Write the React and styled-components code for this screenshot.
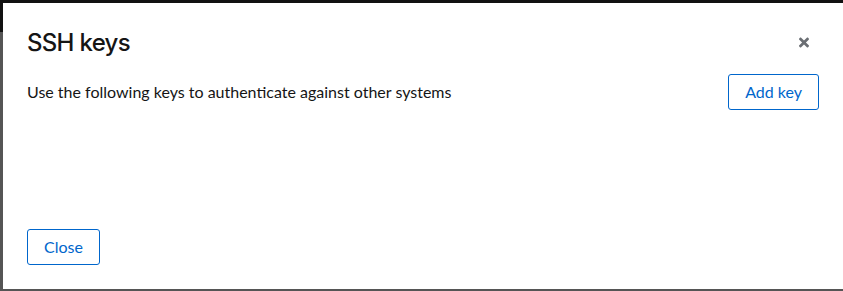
import React from 'react';
import styled, { createGlobalStyle } from 'styled-components';

const GlobalStyle = createGlobalStyle`
  html, body {
    margin: 0;
    padding: 0;
  }
  body {
    font-family: Lato, "Noto Sans", "Liberation Sans", sans-serif;
    color: #151515;
  }
`;

const Backdrop = styled.div`
  width: 843px;
  height: 291px;
  overflow: hidden;
  box-sizing: border-box;
  padding: 3px 0 2px 3px;
  background: linear-gradient(to bottom, #111111 32px, #555555 32px);
`;

const ModalBox = styled.div`
  height: 100%;
  background: #ffffff;
  display: flex;
  flex-direction: column;
`;

const Header = styled.header`
  display: flex;
  align-items: center;
  justify-content: space-between;
  padding: 24px 24px 0 24px;
`;

const Title = styled.h1`
  margin: 0;
  font-family: Inter, "Noto Sans", sans-serif;
  font-size: 24px;
  font-weight: 500;
  line-height: 31px;
  letter-spacing: -0.7px;
`;

const CloseIcon = styled.button`
  border: 0;
  background: transparent;
  padding: 0;
  margin-right: 10px;
  display: flex;
  color: #6a6e73;
  cursor: pointer;
`;

const Body = styled.div`
  flex: 1;
  padding: 16px 24px 0 24px;
`;

const Row = styled.div`
  display: flex;
  align-items: center;
  justify-content: space-between;
`;

const Description = styled.p`
  margin: 0;
  font-size: 16px;
  line-height: 24px;
`;

const Footer = styled.footer`
  padding: 0 24px 24px 24px;
  display: flex;
`;

const SecondaryButton = styled.button`
  font-family: inherit;
  font-size: 16px;
  line-height: 24px;
  color: #0066cc;
  background: #ffffff;
  border: 1px solid #0066cc;
  border-radius: 3px;
  padding: 5px 16px;
  cursor: pointer;
`;

const TimesIcon = () => (
  <svg width="10" height="15" viewBox="0 0 352 512" fill="currentColor" aria-hidden="true">
    <path d="M242.72 256l100.07-100.07c12.28-12.28 12.28-32.19 0-44.48l-22.24-22.24c-12.28-12.28-32.19-12.28-44.48 0L176 189.28 75.930 89.21c-12.28-12.28-32.19-12.28-44.48 0L9.21 111.45c-12.28 12.28-12.28 32.19 0 44.48L109.28 256 9.21 356.07c-12.28 12.28-12.28 32.19 0 44.48l22.24 22.24c12.28 12.28 32.2 12.28 44.48 0L176 322.72l100.07 100.07c12.28 12.28 32.2 12.28 44.480 0l22.24-22.24c12.28-12.28 12.28-32.19 0-44.48L242.72 256z" />
  </svg>
);

const App = () => (
  <>
    <GlobalStyle />
    <Backdrop>
      <ModalBox role="dialog" aria-label="SSH keys">
        <Header>
          <Title>SSH keys</Title>
          <CloseIcon aria-label="Close">
            <TimesIcon />
          </CloseIcon>
        </Header>
        <Body>
          <Row>
            <Description>Use the following keys to authenticate against other systems</Description>
            <SecondaryButton>Add key</SecondaryButton>
          </Row>
        </Body>
        <Footer>
          <SecondaryButton>Close</SecondaryButton>
        </Footer>
      </ModalBox>
    </Backdrop>
  </>
);

export default App;
